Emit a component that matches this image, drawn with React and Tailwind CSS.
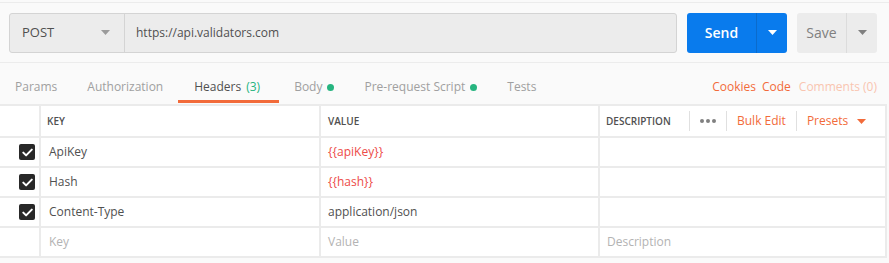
import { useState } from 'react';

const rows = [
  { key: 'ApiKey', value: '{{apiKey}}', isVar: true },
  { key: 'Hash', value: '{{hash}}', isVar: true },
  { key: 'Content-Type', value: 'application/json', isVar: false },
];

function Caret({ className }) {
  return (
    <svg width="9" height="5" viewBox="0 0 9 5" className={className}>
      <path d="M0 0h9L4.5 5z" fill="currentColor" />
    </svg>
  );
}

function Check() {
  return (
    <div className="w-4 h-4 rounded-[2px] bg-[#282828] flex items-center justify-center">
      <svg width="11" height="9" viewBox="0 0 11 9">
        <path d="M1.3 4.6l2.8 2.8L9.8 1.6" stroke="#fff" strokeWidth="2" fill="none" strokeLinecap="round" strokeLinejoin="round" />
      </svg>
    </div>
  );
}

export default function App() {
  const [tab] = useState('Headers');

  const tabs = [
    { name: 'Params' },
    { name: 'Authorization' },
    { name: 'Headers', count: '(3)' },
    { name: 'Body', dot: true },
    { name: 'Pre-request Script', dot: true },
    { name: 'Tests' },
  ];

  return (
    <div className="w-[889px] h-[263px] bg-[#fafafa] overflow-hidden text-[12px] text-[#505050]"
      style={{ fontFamily: '"Open Sans", "Noto Sans", sans-serif' }}>
      <div className="h-[2px]" />
      <div className="border-t border-b border-[#ececec] h-[61px] flex items-center pl-[9px] pr-[12px]">
        {/* request url bar */}
        <div className="flex h-[40px] flex-1 border border-[#d4d4d4] rounded-[3px] bg-[#ececec]">
          <div className="w-[115px] flex items-center justify-between pl-[12px] pr-[14px] border-r border-[#d4d4d4] text-[#505050]">
            <span className="text-[13px]">POST</span>
            <Caret className="text-[#9b9b9b]" />
          </div>
          <div className="flex items-center pl-[11px] text-[#505050]">https://api.validators.com</div>
        </div>
        <div className="ml-[10px] flex h-[40px] w-[100px] rounded-[3px] bg-[#097bed] text-white">
          <div className="flex-1 flex items-center justify-center font-semibold text-[14px] border-r border-[#0b6bcc]">Send</div>
          <div className="w-[30px] flex items-center justify-center"><Caret className="text-white" /></div>
        </div>
        <div className="ml-[10px] flex h-[40px] w-[80px] rounded-[3px] bg-[#ececec] text-[#808080]">
          <div className="flex-1 flex items-center justify-center text-[14px] border-r border-[#dcdcdc]">Save</div>
          <div className="w-[30px] flex items-center justify-center"><Caret className="text-[#808080]" /></div>
        </div>
      </div>

      {/* tabs */}
      <div className="h-[41px] flex items-stretch justify-between pr-[12px]">
        <div className="flex items-stretch">
          {tabs.map((t) => (
            <div key={t.name}
              className={`relative flex items-center pt-[7px] ${t.name === tab ? 'pl-[16px] pr-[19px] text-[#505050]' : 'px-[15px] text-[#a0a0a0]'}`}>
              <span>{t.name}</span>
              {t.count && <span className="ml-[5px] text-[#26b47f]">{t.count}</span>}
              {t.dot && <span className="ml-[5px] w-[7px] h-[7px] rounded-full bg-[#26b47f]" />}
              {t.name === tab && <div className="absolute left-0 right-0 bottom-[1px] h-[3px] bg-[#f26b3a]" />}
            </div>
          ))}
        </div>
        <div className="flex items-center pt-[7px] gap-[6px]">
          <span className="text-[#f26b3a]">Cookies</span>
          <span className="text-[#f26b3a]">Code</span>
          <span className="text-[#f9c5b0] ml-[2px]">Comments (0)</span>
        </div>
      </div>

      {/* headers table */}
      <div className="w-[887px] bg-white border-t-2 border-[#ebebeb]">
        <div className="flex h-[32px] border-b-2 border-[#ebebeb] text-[10px] font-semibold text-[#505050]">
          <div className="w-[41px] border-r-2 border-[#ebebeb]" />
          <div className="w-[280px] pl-[6px] flex items-center border-r-2 border-[#ebebeb]">KEY</div>
          <div className="w-[279px] pl-[7px] flex items-center border-r-2 border-[#ebebeb]">VALUE</div>
          <div className="flex-1 flex items-center border-r-2 border-[#ebebeb]">
            <div className="w-[89px] pl-[6px]">DESCRIPTION</div>
            <div className="h-[20px] border-l border-[#e0e0e0] w-[37px] flex items-center justify-center gap-[2px]">
              <span className="w-[4px] h-[4px] rounded-full bg-[#808080]" />
              <span className="w-[4px] h-[4px] rounded-full bg-[#808080]" />
              <span className="w-[4px] h-[4px] rounded-full bg-[#808080]" />
            </div>
            <div className="h-[20px] border-l border-[#e0e0e0] px-[10px] flex items-center text-[12px] font-normal text-[#f26b3a]">Bulk Edit</div>
            <div className="h-[20px] border-l border-[#e0e0e0] pl-[10px] flex items-center gap-[9px] text-[12px] font-normal text-[#f26b3a]">
              Presets <Caret className="text-[#f26b3a]" />
            </div>
          </div>
        </div>
        {rows.map((r) => (
          <div key={r.key} className="flex h-[30px] border-b-2 border-[#ebebeb]">
            <div className="w-[41px] border-r-2 border-[#ebebeb] flex items-center justify-end pr-[4px]"><Check /></div>
            <div className="w-[280px] pl-[8px] flex items-center border-r-2 border-[#ebebeb] text-[#505050]">{r.key}</div>
            <div className="w-[279px] pl-[7px] flex items-center border-r-2 border-[#ebebeb]">
              <span className={r.isVar ? 'text-[#ed4b48]' : 'text-[#505050]'}>{r.value}</span>
            </div>
            <div className="flex-1 border-r-2 border-[#ebebeb]" />
          </div>
        ))}
        <div className="flex h-[30px] border-b-2 border-[#ebebeb] text-[#b3b3b3]">
          <div className="w-[41px] border-r-2 border-[#ebebeb]" />
          <div className="w-[280px] pl-[8px] flex items-center border-r-2 border-[#ebebeb]">Key</div>
          <div className="w-[279px] pl-[7px] flex items-center border-r-2 border-[#ebebeb]">Value</div>
          <div className="flex-1 pl-[7px] flex items-center border-r-2 border-[#ebebeb]">Description</div>
        </div>
      </div>
    </div>
  );
}
